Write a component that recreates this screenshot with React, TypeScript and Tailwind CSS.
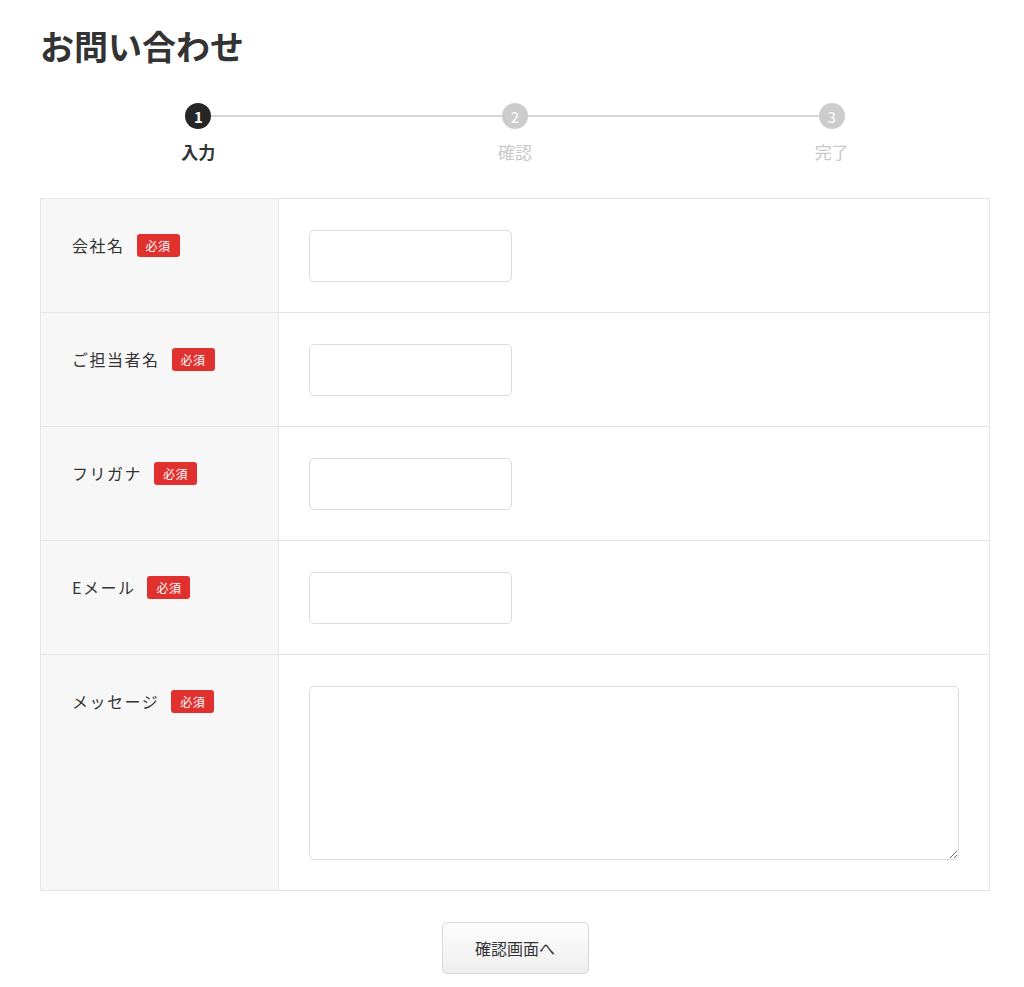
import React from 'react';

const steps = [
  { num: 1, label: '入力', active: true },
  { num: 2, label: '確認', active: false },
  { num: 3, label: '完了', active: false },
];

const fields = [
  { label: '会社名', type: 'input' },
  { label: 'ご担当者名', type: 'input' },
  { label: 'フリガナ', type: 'input' },
  { label: 'Eメール', type: 'input' },
  { label: 'メッセージ', type: 'textarea' },
];

export default function App() {
  return (
    <div
      className="min-h-screen bg-white text-[#333]"
      style={{ fontFamily: '"Noto Sans CJK JP", "Noto Sans", sans-serif' }}
    >
      <div className="px-10 pt-[21px] pb-10">
        <h1 className="text-[34px] font-bold leading-[50px]">お問い合わせ</h1>

        {/* Stepper */}
        <div className="relative mt-[32px] w-[950px]">
          <div className="absolute left-[158px] right-[158px] top-[12px] h-[2px] bg-[#d4d4d4]" />
          <div className="relative grid grid-cols-3">
            {steps.map((s) => (
              <div key={s.num} className="flex flex-col items-center">
                <div
                  className={`flex h-[26px] w-[26px] items-center justify-center rounded-full text-[15px] leading-none text-white ${
                    s.active ? 'bg-[#262626] font-bold' : 'bg-[#cccccc]'
                  }`}
                >
                  {s.num}
                </div>
                <div
                  className={`mt-[10px] text-[17px] leading-[25px] ${
                    s.active ? 'font-bold text-[#333]' : 'text-[#c8c8c8]'
                  }`}
                >
                  {s.label}
                </div>
              </div>
            ))}
          </div>
        </div>

        {/* Form table */}
        <div className="mt-[34px] w-[950px] border border-[#e5e5e5]">
          {fields.map((f, i) => (
            <div key={f.label} className={`flex ${i > 0 ? 'border-t border-[#e5e5e5]' : ''}`}>
              <div className="w-[238px] shrink-0 border-r border-[#e5e5e5] bg-[#f7f7f7] pl-[31px] pt-[32px]">
                <div className="flex items-center gap-[12px]">
                  <span className="text-[16px] leading-[28px] tracking-[1.5px]">{f.label}</span>
                  <span className="rounded-[3px] bg-[#e0312f] px-[9px] text-[12px] leading-[23px] tracking-[0.5px] text-white">
                    必須
                  </span>
                </div>
              </div>
              <div className="flex-1 px-[30px] pt-[31px] pb-[30px]">
                {f.type === 'input' ? (
                  <input className="block h-[52px] w-[203px] rounded-[5px] border border-[#dcdcdc] bg-white" />
                ) : (
                  <textarea className="block h-[174px] w-[650px] rounded-[5px] border border-[#dcdcdc] bg-white" />
                )}
              </div>
            </div>
          ))}
        </div>

        {/* Submit */}
        <div className="mt-[31px] flex w-[950px] justify-center">
          <button className="h-[52px] w-[147px] rounded-[5px] border border-[#d8d8d8] bg-gradient-to-b from-[#fdfdfd] to-[#eeeeee] text-[16px] text-[#333]">
            確認画面へ
          </button>
        </div>
      </div>
    </div>
  );
}
